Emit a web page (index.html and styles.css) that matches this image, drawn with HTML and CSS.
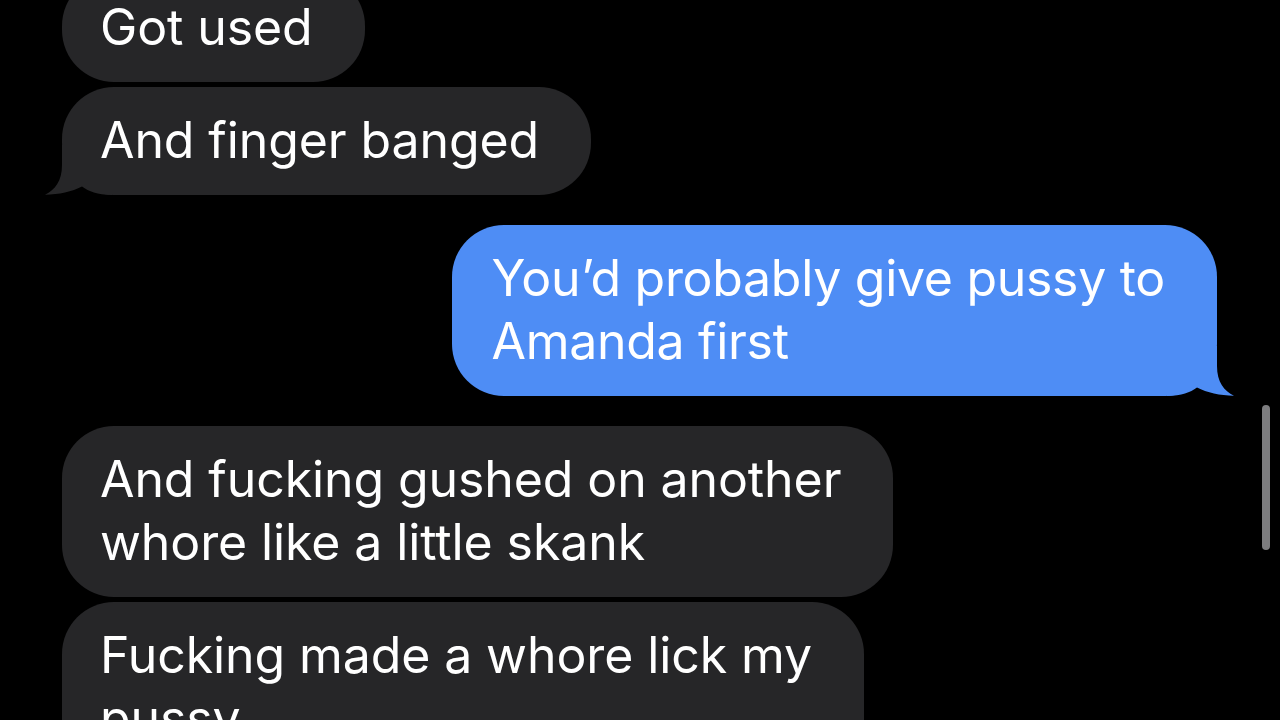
FILE: index.html
```html
<!DOCTYPE html>
<html lang="en">
<head>
<meta charset="utf-8">
<title>Messages</title>
<link rel="stylesheet" href="styles.css">
</head>
<body>
<div class="screen">
  <div class="thread">
    <div class="bubble in"><span class="text">Got used</span></div>
    <div class="bubble in tailed">
      <svg class="tail" viewBox="0 0 70 50" aria-hidden="true"><path d="M20 0 L20 20 C20 36 13 45 3 49.8 C17 49.6 30 46.5 40 41.5 C47 46.5 55 49.6 70 50 L70 0 Z"/></svg>
      <span class="text">And finger banged</span>
    </div>
    <div class="bubble out tailed">
      <svg class="tail" viewBox="0 0 70 50" aria-hidden="true"><path d="M20 0 L20 20 C20 36 13 45 3 49.8 C17 49.6 30 46.5 40 41.5 C47 46.5 55 49.6 70 50 L70 0 Z"/></svg>
      <span class="text">You’d probably give pussy to<br>Amanda first</span>
    </div>
    <div class="bubble in"><span class="text">And fucking gushed on another<br>whore like a little skank</span></div>
    <div class="bubble in"><span class="text">Fucking made a whore lick my<br>pussy</span></div>
  </div>
  <div class="scrollbar"></div>
</div>
</body>
</html>
```
FILE: styles.css
```css
html, body {
  margin: 0;
  padding: 0;
  background: #000;
}
.screen {
  width: 1280px;
  height: 720px;
  overflow: hidden;
  position: relative;
  background: #000;
}
.thread {
  display: flex;
  flex-direction: column;
  padding: 0 63px 0 62px;
  margin-top: -31px;
}
.bubble {
  position: relative;
  width: max-content;
  font-family: Inter, "Noto Sans", sans-serif;
  font-size: 50px;
  line-height: 63px;
  letter-spacing: -0.1px;
  color: #fff;
  padding: 22px 52px 23px 38px;
  border-radius: 52px;
  white-space: nowrap;
}
.text {
  position: relative;
  z-index: 1;
}
.bubble.in {
  align-self: flex-start;
  background: #262628;
  margin-top: 5px;
}
.bubble.out {
  align-self: flex-end;
  background: #4e8df5;
  margin-top: 30px;
  margin-bottom: 25px;
  padding-left: 39px;
  letter-spacing: -0.3px;
}
.tail {
  position: absolute;
  z-index: 0;
  bottom: 0;
  left: -20px;
  width: 70px;
  height: 50px;
  fill: #262628;
}
.out .tail {
  left: auto;
  right: -20px;
  transform: scaleX(-1);
  fill: #4e8df5;
}
.scrollbar {
  position: absolute;
  right: 10px;
  top: 405px;
  width: 8px;
  height: 145px;
  border-radius: 4px;
  background: #7d7d7f;
}
```
